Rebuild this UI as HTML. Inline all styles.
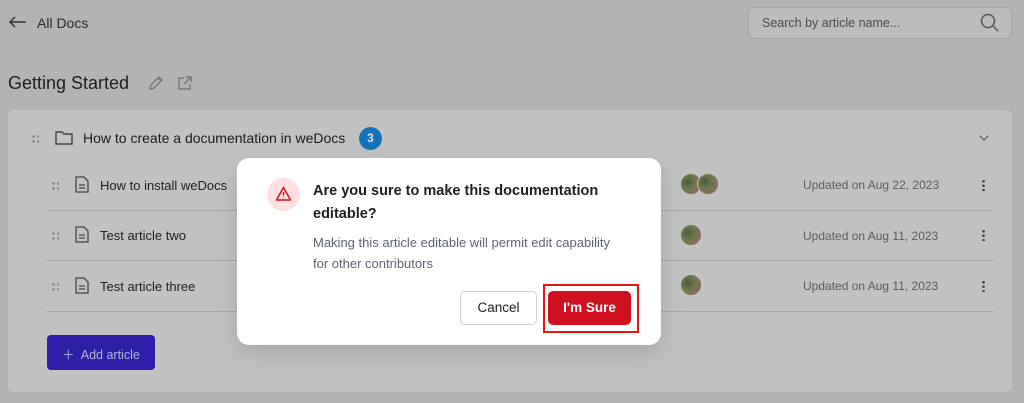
<!DOCTYPE html>
<html><head><style>
*{margin:0;padding:0;box-sizing:border-box}
body{width:1024px;height:403px;background:#b3b3b3;font-family:"Liberation Sans",sans-serif;position:relative;overflow:hidden;color:#1f1f1f}
.a{position:absolute}
.t{font-size:13px;color:#1d1d1d}
.muted{color:#5a5a5a;font-size:12px}
.drag{width:8px;height:10px;background-image:radial-gradient(circle,#888 1.2px,transparent 1.5px);background-size:5px 5px}
.av{width:22px;height:22px;border-radius:50%;background:radial-gradient(circle at 35% 40%,#4a5a3a,#6d7a4f 40%,#8a6a5a 70%,#b0607a);border:1px solid #c2c2c2}
.dots{width:3px;height:12px;background-image:radial-gradient(circle,#444 1.2px,transparent 1.5px);background-size:3px 4.5px}
.line{height:1px;background:#a8a8a8;left:47px;width:946px}
</style></head><body>
<svg class="a" style="left:8px;top:15px" width="20" height="14" viewBox="0 0 20 14"><path d="M18 7H2M7 2L2 7l5 5" stroke="#333" stroke-width="1.5" fill="none"/></svg>
<div class="a" style="left:37px;top:15px;font-size:14px;color:#2a2a2a">All Docs</div>
<div class="a" style="left:748px;top:7px;width:264px;height:32px;border:1px solid #a5a5a5;border-radius:6px;background:#bcbcbc"></div>
<div class="a" style="left:762px;top:16px;font-size:12.5px;color:#4a4a4a">Search by article name...</div>
<svg class="a" style="left:980px;top:13px" width="19" height="19" viewBox="0 0 19 19"><circle cx="8" cy="8" r="6.5" stroke="#555" stroke-width="1.5" fill="none"/><path d="M13 13l5 5" stroke="#555" stroke-width="1.5"/></svg>
<div class="a" style="left:8px;top:73px;font-size:18px;color:#1e1e1e">Getting Started</div>
<svg class="a" style="left:148px;top:75px" width="16" height="16" viewBox="0 0 16 16"><path d="M2 14l1-4L11 2l3 3-8 8z M10 3l3 3" stroke="#777" stroke-width="1.4" fill="none"/></svg>
<svg class="a" style="left:177px;top:75px" width="16" height="16" viewBox="0 0 16 16"><path d="M7 3H2v11h11V9M9 2h5v5M14 2L7 9" stroke="#777" stroke-width="1.4" fill="none"/></svg>
<div class="a" style="left:8px;top:110px;width:1004px;height:282px;background:#c2c2c2;border-radius:5px"></div>
<div class="a drag" style="left:31px;top:134px"></div>
<svg class="a" style="left:55px;top:130px" width="18" height="16" viewBox="0 0 18 16"><path d="M1 2h6l2 2h8v10H1z" stroke="#444" stroke-width="1.4" fill="none"/></svg>
<div class="a" style="left:83px;top:130px;font-size:14px;color:#1a1a1a">How to create a documentation in weDocs</div>
<div class="a" style="left:359px;top:127px;width:23px;height:23px;border-radius:50%;background:#1472b8;color:#dde;font-size:12px;text-align:center;line-height:23px;font-weight:bold">3</div>
<svg class="a" style="left:978px;top:134px" width="12" height="8" viewBox="0 0 12 8"><path d="M2 2l4 4 4-4" stroke="#666" stroke-width="1.3" fill="none"/></svg>

<div class="a drag" style="left:51px;top:181px"></div>
<svg class="a" style="left:75px;top:176px" width="14" height="17" viewBox="0 0 14 17"><path d="M1 1h8l4 4v11H1zM4 9h6M4 12h6" stroke="#444" stroke-width="1.3" fill="none"/></svg>
<div class="a t" style="left:100px;top:178px">How to install weDocs</div>
<div class="a drag" style="left:51px;top:231px"></div>
<svg class="a" style="left:75px;top:226px" width="14" height="17" viewBox="0 0 14 17"><path d="M1 1h8l4 4v11H1zM4 9h6M4 12h6" stroke="#444" stroke-width="1.3" fill="none"/></svg>
<div class="a t" style="left:100px;top:228px">Test article two</div>
<div class="a drag" style="left:51px;top:282px"></div>
<svg class="a" style="left:75px;top:277px" width="14" height="17" viewBox="0 0 14 17"><path d="M1 1h8l4 4v11H1zM4 9h6M4 12h6" stroke="#444" stroke-width="1.3" fill="none"/></svg>
<div class="a t" style="left:100px;top:279px">Test article three</div>
<div class="a line" style="top:210px"></div>
<div class="a line" style="top:260px"></div>
<div class="a line" style="top:311px"></div>

<div class="a av" style="left:680px;top:173px"></div><div class="a av" style="left:697px;top:173px"></div>
<div class="a av" style="left:680px;top:224px"></div>
<div class="a av" style="left:680px;top:274px"></div>
<div class="a muted" style="left:803px;top:178px">Updated on Aug 22, 2023</div>
<div class="a muted" style="left:803px;top:229px">Updated on Aug 11, 2023</div>
<div class="a muted" style="left:803px;top:279px">Updated on Aug 11, 2023</div>
<div class="a dots" style="left:982px;top:179px"></div>
<div class="a dots" style="left:982px;top:229px"></div>
<div class="a dots" style="left:982px;top:280px"></div>

<div class="a" style="left:47px;top:335px;width:108px;height:35px;background:#2d1fa8;border-radius:4px"></div>
<div class="a" style="left:62px;top:344px;font-size:12.5px;color:#b8b5dd">＋&nbsp; Add article</div>

<div class="a" style="left:237px;top:158px;width:424px;height:187px;background:#fff;border-radius:12px;box-shadow:0 8px 24px rgba(0,0,0,.15)"></div>
<div class="a" style="left:267px;top:178px;width:33px;height:33px;border-radius:50%;background:#fde0e2"></div>
<svg class="a" style="left:275px;top:186px" width="17" height="16" viewBox="0 0 17 16"><path d="M8.5 1.5L15.5 14h-14z M8.5 6v3.5 M8.5 11.5v.5" stroke="#d0141f" stroke-width="1.5" fill="none" stroke-linejoin="round"/></svg>
<div class="a" style="left:313px;top:180px;font-size:14.5px;font-weight:bold;color:#1e1e1e;line-height:23px;width:340px">Are you sure to make this documentation editable?</div>
<div class="a" style="left:313px;top:232px;font-size:13px;color:#5f6470;line-height:21px;white-space:nowrap">Making this article editable will permit edit capability<br>for other contributors</div>
<div class="a" style="left:460px;top:291px;width:77px;height:34px;border:1px solid #d0d0d0;border-radius:5px;font-size:13.5px;text-align:center;line-height:32px;color:#222">Cancel</div>
<div class="a" style="left:543px;top:284px;width:96px;height:49px;border:2px solid #e8141a"></div>
<div class="a" style="left:548px;top:291px;width:83px;height:34px;background:#d00f1f;border-radius:5px;font-size:13.5px;text-align:center;line-height:34px;color:#fff;font-weight:bold">I'm Sure</div>
</body></html>
